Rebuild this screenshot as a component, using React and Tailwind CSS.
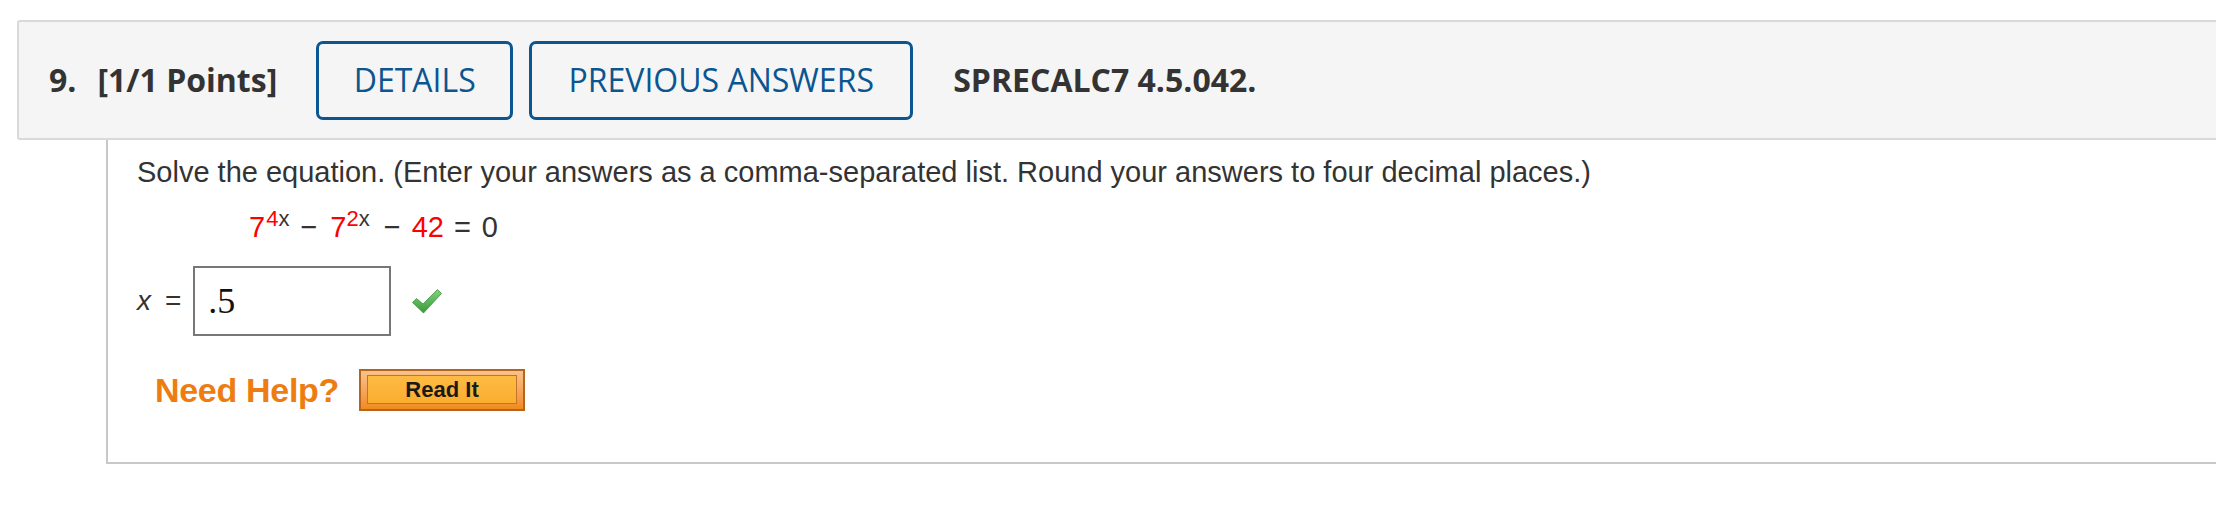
export default function App() {
  return (
    <div className="w-[2216px] h-[518px] overflow-hidden bg-white pt-[20px] pl-[17px]">
      {/* question header */}
      <div className="flex items-center h-[120px] w-[2240px] bg-[#f5f5f5] border-2 border-r-0 border-[#d9d9d9] rounded-l-[3px] pl-[30px] text-[#333] font-['Open_Sans',sans-serif]">
        <span className="text-[32px] font-bold">9.</span>
        <span className="ml-[21px] text-[32px] font-bold">[1/1 Points]</span>
        <button className="ml-[39px] h-[79px] w-[197px] border-[3px] border-[#0b5591] rounded-[7px] text-[#0b5591] text-[32px] font-medium">
          DETAILS
        </button>
        <button className="ml-[16px] h-[79px] w-[384px] border-[3px] border-[#0b5591] rounded-[7px] text-[#0b5591] text-[32px] font-medium">
          PREVIOUS ANSWERS
        </button>
        <span className="ml-[40px] text-[32px] font-bold">SPRECALC7 4.5.042.</span>
      </div>

      {/* question body */}
      <div className="ml-[89px] h-[324px] w-[2200px] border-l-2 border-b-2 border-[#c8c8c8] pl-[29px] pt-[12px] text-[#333] font-['Liberation_Sans',Arial,sans-serif]">
        <p className="text-[29px] leading-[40px]">
          Solve the equation. (Enter your answers as a comma-separated list. Round your answers to four decimal places.)
        </p>

        <div className="mt-[15px] ml-[112px] flex items-baseline text-[29px] leading-[40px]">
          <span className="text-[#ff0000]">7</span>
          <sup className="relative -top-[11px] ml-[1px] text-[22px] align-baseline">
            <span className="text-[#ff0000]">4</span>x
          </sup>
          <span className="ml-[11px]">−</span>
          <span className="ml-[13px] text-[#ff0000]">7</span>
          <sup className="relative -top-[11px] text-[22px] align-baseline">
            <span className="text-[#ff0000]">2</span>x
          </sup>
          <span className="ml-[14px]">−</span>
          <span className="ml-[11px] text-[#ff0000]">42</span>
          <span className="ml-[10px]">=</span>
          <span className="ml-[11px]">0</span>
        </div>

        <div className="mt-[19px] flex items-center">
          <span className="text-[28px] italic">x</span>
          <span className="ml-[14px] text-[28px]">=</span>
          <div className="ml-[12px] flex items-center h-[70px] w-[198px] border-2 border-[#777] bg-white pl-[13px]">
            <span className="text-[36px] text-[#111] font-['Liberation_Serif',serif]">.5</span>
          </div>
          <svg className="ml-[21px]" width="30" height="25" viewBox="0 0 30 25">
            <defs>
              <linearGradient id="chk" x1="0" y1="0" x2="0" y2="1">
                <stop offset="0" stopColor="#86cf7c" />
                <stop offset="0.5" stopColor="#5cb65a" />
                <stop offset="1" stopColor="#3d963d" />
              </linearGradient>
            </defs>
            <path d="M0.5 13.5 L4.5 9.5 L11 15 L25.5 0.5 L29.5 4.5 L11.5 24 Z" fill="url(#chk)" stroke="#3f9440" strokeWidth="0.8" strokeLinejoin="round" />
          </svg>
        </div>

        <div className="mt-[33px] ml-[18px] flex items-center">
          <span className="text-[34px] leading-[42px] font-bold text-[#ee7d11] tracking-[-0.3px]">Need Help?</span>
          <div className="ml-[20px] h-[42px] w-[166px] border-2 border-[#b4661f] bg-gradient-to-b from-[#f9c28a] to-[#f28a1a] px-[6px] pt-[4px] pb-[5px]">
            <div className="flex h-full items-center justify-center border border-[#c37526] bg-gradient-to-b from-[#fdbb44] to-[#fbad2e]">
              <span className="text-[22px] font-bold text-[#1a1a1a] leading-none">Read It</span>
            </div>
          </div>
        </div>
      </div>
    </div>
  );
}
